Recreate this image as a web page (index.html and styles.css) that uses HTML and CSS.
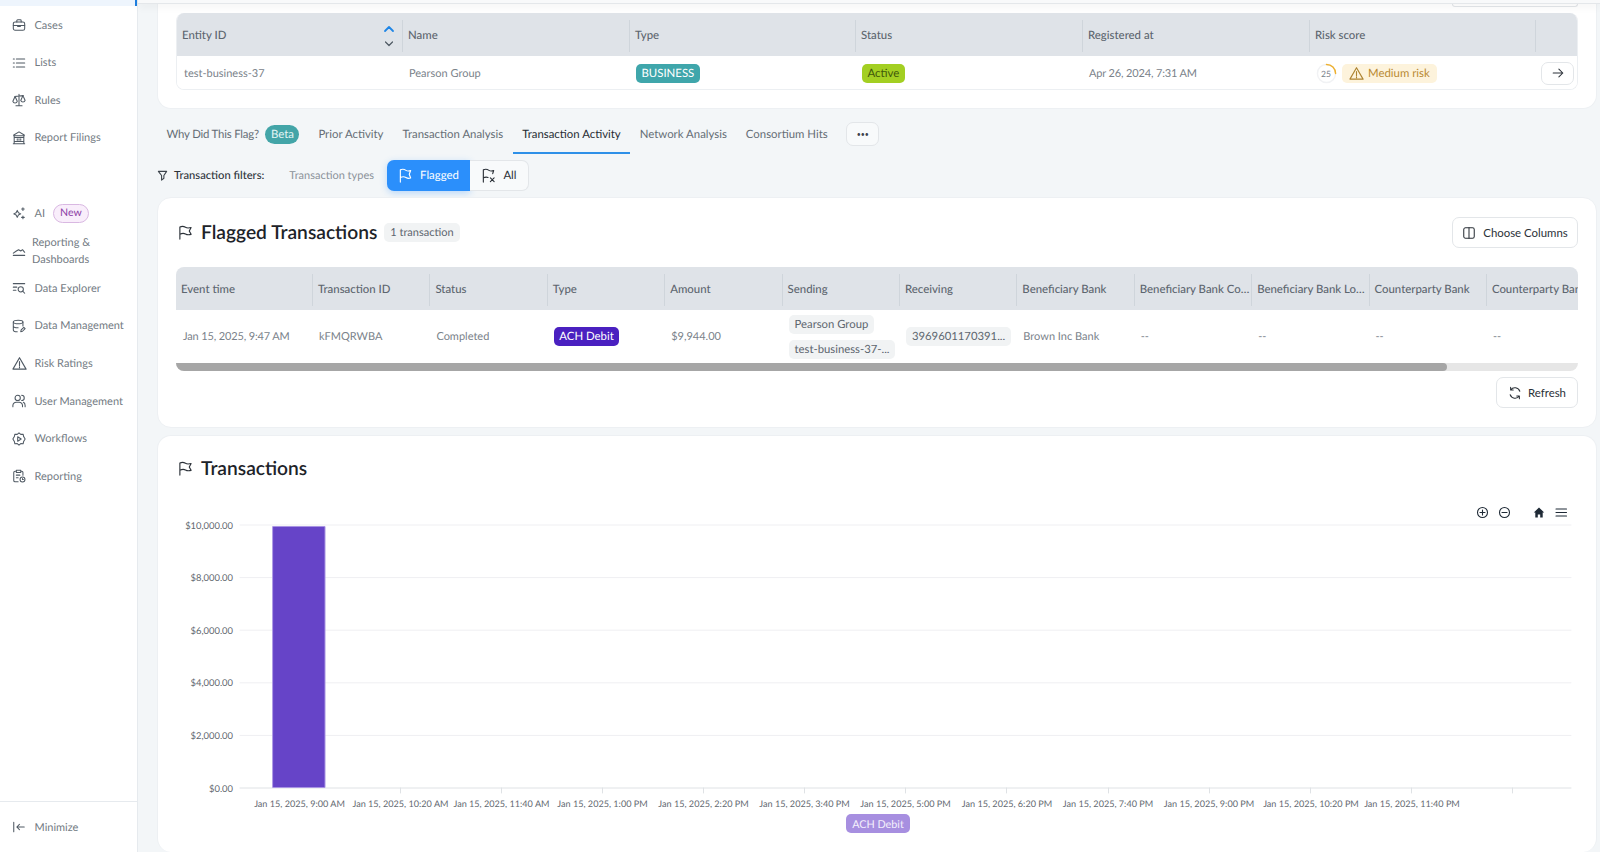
FILE: index.html
```html
<!DOCTYPE html>
<html lang="en">
<head>
    <meta charset="UTF-8">
    <title>Case details</title>
    <link rel="stylesheet" href="styles.css">
</head>
<body>
    <aside class="sidebar">
        <div class="nav-active-stub"></div>
        <a class="nav-item">
            <svg class="nav-icon" viewBox="0 0 16 16"><rect x="1.5" y="4.5" width="13" height="9.5" rx="2"/><path d="M5.5 4.5V3a1 1 0 0 1 1-1h3a1 1 0 0 1 1 1v1.500M1.500 8.500h13M6.500 8.500v1.200h3V8.500"/></svg>
            <span>Cases</span>
        </a>
        <a class="nav-item">
            <svg class="nav-icon" viewBox="0 0 16 16"><path d="M5 3.500h9.500M5 8h9.500M5 12.500h9.500M1.500 3.500h1.200M1.500 8h1.200M1.500 12.500h1.200"/></svg>
            <span>Lists</span>
        </a>
        <a class="nav-item">
            <svg class="nav-icon" viewBox="0 0 16 16"><path d="M8 1.500v12.500M4.500 14.500h7M3 4l10-1M3.500 4 1 9.500a2.600 2.600 0 0 0 5 0zM12.500 3 10 8.500a2.600 2.600 0 0 0 5 0z"/></svg>
            <span>Rules</span>
        </a>
        <a class="nav-item">
            <svg class="nav-icon" viewBox="0 0 16 16"><path d="M8 1 2 4.500v1h12v-1zM1.500 14.500h13M2.500 5.500v9M13.500 5.500v9M2.500 12h11M2.500 7.500h11M6 9v1.500M8 9v1.500M10 9v1.500"/></svg>
            <span>Report Filings</span>
        </a>
        <div class="nav-spacer"></div>
        <a class="nav-item">
            <svg class="nav-icon" viewBox="0 0 16 16"><path d="M6 5 7.300 7.700 10 9 7.300 10.300 6 13 4.700 10.300 2 9 4.700 7.700zM12.500 2v3M11 3.500h3M12.500 11.500v3M11 13h3"/></svg>
            <span>AI</span>
            <span class="new-pill">New</span>
        </a>
        <a class="nav-item nav-item-wrap">
            <svg class="nav-icon" viewBox="0 0 16 16"><path d="M1.500 13h13M1.500 10.500 5 8l2.500-1.500L10 8l2-1.500 2.500 3"/></svg>
            <span>Reporting &amp; Dashboards</span>
        </a>
        <a class="nav-item">
            <svg class="nav-icon" viewBox="0 0 16 16"><path d="M1.500 3h13M1.500 7h4M1.500 10.500h3"/><circle cx="10" cy="9.500" r="3"/><path d="m12.200 11.700 2.300 2.300"/></svg>
            <span>Data Explorer</span>
        </a>
        <a class="nav-item">
            <svg class="nav-icon" viewBox="0 0 16 16"><ellipse cx="7" cy="3.500" rx="5.500" ry="2"/><path d="M1.500 3.500v9c0 1.100 2.200 2 4.500 2M12.500 3.500V8M1.500 8c0 1.100 2.500 2 5.500 2M10 14.500l.5-2 3-3 1.500 1.500-3 3z"/></svg>
            <span>Data Management</span>
        </a>
        <a class="nav-item">
            <svg class="nav-icon nav-icon-lg" viewBox="0 0 16 16"><path d="M8 1.800 1 14h14zM8 6v4.200M8 11.600v.8"/></svg>
            <span>Risk Ratings</span>
        </a>
        <a class="nav-item">
            <svg class="nav-icon" viewBox="0 0 16 16"><circle cx="6.500" cy="4.500" r="3"/><path d="M1 14.500v-1.500a4 4 0 0 1 4-3.500h3a4 4 0 0 1 4 3.500v1.500M11 1.500a3 3 0 0 1 0 6M13 9.500c1.300.6 2 1.800 2 3.500v1.500"/></svg>
            <span>User Management</span>
        </a>
        <a class="nav-item">
            <svg class="nav-icon" viewBox="0 0 16 16"><path d="m8 1 2 1.700 2.700-.2.600 2.700L15 8l-1.700 2.800-.6 2.700-2.700-.2L8 15l-2-1.700-2.700.2-.6-2.700L1 8l1.700-2.800.6-2.700 2.700.2z"/><path d="M6.500 5.500v5L10.500 8z"/></svg>
            <span>Workflows</span>
        </a>
        <a class="nav-item">
            <svg class="nav-icon" viewBox="0 0 16 16"><path d="M7 14.500H3.500a1.500 1.500 0 0 1-1.500-1.500V4a1.500 1.500 0 0 1 1.500-1.500H5M10 2.500h1A1.500 1.500 0 0 1 12.500 4v3M5 1.500h5v2.500H5zM5 7h4M5 10h2"/><circle cx="12" cy="12" r="2.800"/><path d="M12 10.800V12h1"/></svg>
            <span>Reporting</span>
        </a>
        <div class="sidebar-footer">
            <svg class="nav-icon" viewBox="0 0 16 16"><path d="M2 2.500v11M14 8H5.500M8.500 5 5.500 8l3 3"/></svg>
            <span>Minimize</span>
        </div>
    </aside>

    <main class="main">
        <div class="top-strip"></div>

        <section class="card entity-card">
            <div class="cut-button"></div>
            <div class="table entity-table">
                <div class="thead entity-cols">
                    <div class="th th-first th-sort">
                        Entity ID
                        <svg class="sort-icon" viewBox="0 0 12 22"><path class="sort-up" d="m2 6 4-4 4 4"/><path d="m2.500 17 3.500 3.500 3.500-3.500"/></svg>
                    </div>
                    <div class="th">Name</div>
                    <div class="th">Type</div>
                    <div class="th">Status</div>
                    <div class="th">Registered at</div>
                    <div class="th">Risk score</div>
                    <div class="th"></div>
                </div>
                <div class="entity-cols entity-row">
                    <div class="td">test-business-37</div>
                    <div class="td">Pearson Group</div>
                    <div class="td td-badge"><span class="badge badge-teal">BUSINESS</span></div>
                    <div class="td td-badge"><span class="badge badge-lime">Active</span></div>
                    <div class="td td-date">Apr 26, 2024, 7:31 AM</div>
                    <div class="td td-risk">
                        <svg class="risk-ring" viewBox="0 0 22 22">
                            <circle cx="11" cy="11" r="9.500"/>
                            <path d="M11 1.500A9.500 9.500 0 0 1 20.500 11"/>
                            <text x="10.500" y="14.200">25</text>
                        </svg>
                        <span class="risk-pill">
                            <svg viewBox="0 0 16 16"><path d="M8 1.800 1 14h14zM8 6v4.200M8 11.600v.8"/></svg>
                            Medium risk
                        </span>
                    </div>
                    <div class="td td-action">
                        <button class="btn arrow-btn">
                            <svg viewBox="0 0 16 16"><path d="M2.500 8h11M9 3.500 13.500 8 9 12.500"/></svg>
                        </button>
                    </div>
                </div>
            </div>
        </section>

        <nav class="tabs">
            <a class="tab"><span class="tab-tight">Why Did This Flag?</span> <span class="beta-pill">Beta</span></a>
            <a class="tab">Prior Activity</a>
            <a class="tab">Transaction Analysis</a>
            <a class="tab tab-active">Transaction Activity</a>
            <a class="tab">Network Analysis</a>
            <a class="tab">Consortium Hits</a>
            <button class="btn more-btn">&#8226;&#8226;&#8226;</button>
        </nav>

        <div class="filters">
            <svg class="filter-icon" viewBox="0 0 12 12"><path d="M1.500 1.500h9L7.500 6v3L5 11V6z"/></svg>
            <span class="filter-label">Transaction filters:</span>
            <span class="filter-type">Transaction types</span>
            <div class="segmented">
                <span class="segment segment-on">
                    <svg viewBox="0 0 16 16"><path d="M2.500 15V2c3-1.500 4.500-.5 6 .5s3 1 5 .2l-1.500 4 1.500 4c-2 .8-3.500.5-5-.5s-3-1.500-6 0"/></svg>
                    Flagged
                </span>
                <span class="segment">
                    <svg viewBox="0 0 16 16"><path d="M2.500 15V2c3-1.500 4.500-.5 6 .5s3 1 5 .2l-1 3.300M2.500 10.500c2-1 3.500-1 5-.4M10 10.500l4 4M14 10.500l-4 4"/></svg>
                    All
                </span>
            </div>
        </div>

        <section class="card flagged-card">
            <div class="card-head">
                <svg class="title-flag" viewBox="0 0 16 16"><path d="M2 15V2.200c3-1.500 4.500-.6 6 .3s3 1 6 .2l-2 3.800 2 3.500c-3 .8-4.500.5-6-.4s-3-1.200-6 .2"/></svg>
                <h2 class="card-title">Flagged Transactions</h2>
                <span class="count-chip">1 transaction</span>
                <button class="btn columns-btn">
                    <svg viewBox="0 0 16 16"><rect x="2" y="2" width="12" height="12" rx="2"/><path d="M8 2v12"/></svg>
                    Choose Columns
                </button>
            </div>
            <div class="table tx-wrap">
                <div class="tx-scroll">
                    <div class="thead tx-cols">
                        <div class="th th-first">Event time</div>
                        <div class="th">Transaction ID</div>
                        <div class="th">Status</div>
                        <div class="th">Type</div>
                        <div class="th">Amount</div>
                        <div class="th">Sending</div>
                        <div class="th">Receiving</div>
                        <div class="th">Beneficiary Bank</div>
                        <div class="th"><span class="ellipsis">Beneficiary Bank Country</span></div>
                        <div class="th"><span class="ellipsis">Beneficiary Bank Location</span></div>
                        <div class="th">Counterparty Bank</div>
                        <div class="th">Counterparty Bank Country</div>
                    </div>
                    <div class="tx-cols tx-row">
                        <div class="td td-date">Jan 15, 2025, 9:47 AM</div>
                        <div class="td">kFMQRWBA</div>
                        <div class="td">Completed</div>
                        <div class="td td-badge"><span class="badge badge-purple">ACH Debit</span></div>
                        <div class="td">$9,944.00</div>
                        <div class="td td-badge td-chips">
                            <span class="chip">Pearson Group</span>
                            <span class="chip">test-business-37-...</span>
                        </div>
                        <div class="td td-badge"><span class="chip">3969601170391...</span></div>
                        <div class="td">Brown Inc Bank</div>
                        <div class="td">--</div>
                        <div class="td">--</div>
                        <div class="td">--</div>
                        <div class="td">--</div>
                    </div>
                </div>
                <div class="scroll-track"><div class="scroll-thumb"></div></div>
            </div>
            <div class="card-foot">
                <button class="btn refresh-btn">
                    <svg viewBox="0 0 16 16"><path d="M13.500 6A6 6 0 0 0 3 4.500M2.500 10a6 6 0 0 0 10.500 1.500M3 1.500v3h3M13 14.500v-3h-3"/></svg>
                    Refresh
                </button>
            </div>
        </section>

        <section class="card chart-card">
            <div class="chart-head">
                <svg class="title-flag" viewBox="0 0 16 16"><path d="M2 15V2.200c3-1.500 4.500-.6 6 .3s3 1 6 .2l-2 3.800 2 3.500c-3 .8-4.500.5-6-.4s-3-1.200-6 .2"/></svg>
                <h2 class="card-title">Transactions</h2>
            </div>
            <svg class="chart" viewBox="157 490 1440 362">
                <g class="grid">
                    <path d="M240 525H1571M240 577.600H1571M240 630.200H1571M240 682.800H1571M240 735.400H1571"/>
                </g>
                <path class="axis" d="M240 788H1571M400.500 788v5M501.500 788v5M602.500 788v5M703.500 788v5M804.500 788v5M905.500 788v5M1006.500 788v5M1108.500 788v5M1209.500 788v5M1310.500 788v5M1411.500 788v5M1512.500 788v5"/>
                <rect class="bar" x="273" y="526.500" width="52" height="261"/>
                <g class="y-labels">
                    <text x="233" y="528.500">$10,000.00</text>
                    <text x="233" y="581">$8,000.00</text>
                    <text x="233" y="633.500">$6,000.00</text>
                    <text x="233" y="686">$4,000.00</text>
                    <text x="233" y="739">$2,000.00</text>
                    <text x="233" y="791.500">$0.00</text>
                </g>
                <g class="x-labels">
                    <text x="299.500" y="807">Jan 15, 2025, 9:00 AM</text>
                    <text x="400.500" y="807">Jan 15, 2025, 10:20 AM</text>
                    <text x="501.500" y="807">Jan 15, 2025, 11:40 AM</text>
                    <text x="602.500" y="807">Jan 15, 2025, 1:00 PM</text>
                    <text x="703.500" y="807">Jan 15, 2025, 2:20 PM</text>
                    <text x="804.500" y="807">Jan 15, 2025, 3:40 PM</text>
                    <text x="905.500" y="807">Jan 15, 2025, 5:00 PM</text>
                    <text x="1007" y="807">Jan 15, 2025, 6:20 PM</text>
                    <text x="1108" y="807">Jan 15, 2025, 7:40 PM</text>
                    <text x="1209" y="807">Jan 15, 2025, 9:00 PM</text>
                    <text x="1311" y="807">Jan 15, 2025, 10:20 PM</text>
                    <text x="1412" y="807">Jan 15, 2025, 11:40 PM</text>
                </g>
                <rect class="legend-box" x="846" y="814" width="64" height="19" rx="5"/>
                <text class="legend-text" x="878" y="827.500">ACH Debit</text>
                <g class="toolbar">
                    <circle cx="1482.500" cy="512.500" r="5"/>
                    <path d="M1480 512.500h5M1482.500 510v5"/>
                    <circle cx="1504.500" cy="512.500" r="5"/>
                    <path d="M1502 512.500h5"/>
                    <path d="M1556 509h10.500M1556 512.500h10.500M1556 516h10.500"/>
                    <path class="home" d="M1539 507.500 1533.800 512.500h1.500v5h2.500v-3h2.400v3h2.500v-5h1.500z"/>
                </g>
            </svg>
        </section>
    </main>
</body>
</html>
```

FILE: styles.css
```css
* {
    box-sizing: border-box;
}

body {
    margin: 0;
    width: 1600px;
    height: 852px;
    overflow: hidden;
    display: flex;
    font-family: "Lato", "Noto Sans", sans-serif;
    font-size: 11.4px;
    text-rendering: geometricPrecision;
    color: #6f7780;
    background: #f3f6f8;
}

svg {
    fill: none;
    stroke: currentColor;
    stroke-width: 1.2;
    stroke-linecap: round;
    stroke-linejoin: round;
    flex-shrink: 0;
}

/* sidebar */
.sidebar {
    width: 138px;
    height: 852px;
    flex-shrink: 0;
    display: flex;
    flex-direction: column;
    background: #fff;
    border-right: 1px solid #e6eaee;
    font-size: 11px;
}

.nav-active-stub {
    height: 6.400px;
    flex-shrink: 0;
    background: #eef5fd;
    border-right: 2px solid #1f7fe0;
}

.nav-item {
    height: 37.6px;
    flex-shrink: 0;
    display: flex;
    align-items: center;
    gap: 8.500px;
    padding-left: 12px;
    color: #737b83;
}

.nav-item-wrap {
    gap: 6px;
    line-height: 17px;
}

.nav-spacer {
    height: 37.6px;
    flex-shrink: 0;
}

.nav-icon {
    width: 14px;
    height: 14px;
    color: #4f5963;
}

.nav-icon-lg {
    width: 15px;
    height: 15px;
    margin-right: -1px;
}

.new-pill {
    height: 19px;
    padding: 0 6.500px;
    margin-left: -1px;
    display: flex;
    align-items: center;
    border: 1px solid #d9b8e2;
    border-radius: 10px;
    background: #f9eefb;
    color: #8e3ea6;
    font-size: 10.600px;
}

.sidebar-footer {
    margin-top: auto;
    height: 51px;
    display: flex;
    align-items: center;
    gap: 8.500px;
    padding: 0 12px;
    border-top: 1px solid #e6eaee;
    color: #737b83;
}

/* main column */
.main {
    flex: 1;
    min-width: 0;
    height: 852px;
    padding: 0 3px 0 19px;
    display: flex;
    flex-direction: column;
    position: relative;
}

.top-strip {
    height: 4px;
    margin: 0 -3px 0 -19px;
    background: #f8f9fa;
    border-bottom: 1px solid #e4e7ea;
    box-shadow: 0 2px 8px rgba(0, 0, 0, 0.08);
    position: relative;
    z-index: 1;
}

.card {
    background: #fff;
    border-radius: 14px;
    border: 1px solid #edf0f3;
    flex-shrink: 0;
}

.entity-card {
    height: 105px;
    padding: 0 18px;
    border-top: none;
    border-top-left-radius: 0;
    border-top-right-radius: 0;
}

.cut-button {
    width: 126px;
    height: 3px;
    margin-left: auto;
    margin-bottom: 6px;
    border: 1px solid #e3e6e9;
    border-top: none;
    border-radius: 0 0 6px 6px;
}

.table {
    border-radius: 8px;
    overflow: hidden;
}

.entity-table {
    border: 1px solid #eceff2;
    border-top: none;
}

.thead {
    height: 43px;
    background: #dfe3e8;
    color: #5d666f;
}

.entity-cols {
    display: grid;
    grid-template-columns: 225px 227px 226px 227px 227px 226px 43px;
}

.th {
    margin: 7px 0 4px;
    padding: 0 0 1px 5px;
    display: flex;
    align-items: center;
    white-space: nowrap;
    border-left: 1px solid #cfd5db;
    min-width: 0;
    font-weight: 500;
}

.th-first {
    border-left: none;
}

.th-sort {
    justify-content: space-between;
    padding-right: 7px;
}

.sort-icon {
    width: 12px;
    height: 22px;
    color: #4f5963;
}

.sort-up {
    stroke: #1f86e6;
    stroke-width: 1.8;
}

.ellipsis {
    overflow: hidden;
    text-overflow: ellipsis;
}

.td {
    padding-left: 7px;
    display: flex;
    align-items: center;
    white-space: nowrap;
    color: #7a828a;
    font-size: 11px;
}

.td-date {
    letter-spacing: -0.150px;
}

.entity-row {
    height: 33px;
    padding-top: 1px;
    background: #fff;
}

.badge {
    height: 19px;
    padding: 0 5.500px;
    display: inline-flex;
    align-items: center;
    border-radius: 5px;
    font-size: 11.400px;
}

.badge-teal {
    background: #3fa6ab;
    color: #fff;
}

.badge-lime {
    background: #a3cf22;
    color: #40570a;
}

.badge-purple {
    background: #4a20c0;
    color: #fff;
}

.td-risk {
    padding-left: 7px;
    gap: 5px;
}

.risk-ring {
    width: 21px;
    height: 21px;
}

.risk-ring circle {
    stroke: #f1f2f4;
    stroke-width: 1.5;
}

.risk-ring path {
    stroke: #eeb130;
    stroke-width: 1.5;
}

.risk-ring text {
    fill: #7a828a;
    stroke: none;
    font-size: 9px;
    text-anchor: middle;
}

.risk-pill {
    height: 19px;
    padding: 0 7px;
    display: inline-flex;
    align-items: center;
    gap: 4px;
    border-radius: 5px;
    background: #fdf3dc;
    color: #b98a33;
    font-size: 11.400px;
}

.risk-pill svg {
    width: 15px;
    height: 15px;
    color: #ad8330;
}

.td-action {
    padding-left: 6px;
}

.btn {
    background: #fff;
    border: 1px solid #e3e6e9;
    border-radius: 7px;
    font-family: inherit;
    font-size: 11.400px;
    color: #2b3138;
    display: inline-flex;
    align-items: center;
    justify-content: center;
    padding: 0;
}

.arrow-btn {
    width: 33px;
    height: 23px;
}

.arrow-btn svg {
    width: 14px;
    height: 14px;
}

/* tabs */
.tabs {
    height: 37px;
    margin-top: 8px;
    display: flex;
    align-items: stretch;
    flex-shrink: 0;
}

.tab {
    padding: 0 9.500px;
    display: flex;
    align-items: center;
    gap: 6.500px;
    color: #656d75;
    border-bottom: 2px solid transparent;
    white-space: nowrap;
}

.tab-tight {
    letter-spacing: -0.200px;
}

.tab-active {
    color: #262c33;
    border-bottom-color: #2e90e8;
}

.beta-pill {
    height: 19px;
    padding: 0 5.500px;
    display: flex;
    align-items: center;
    border-radius: 10px;
    background: #43a5a8;
    color: #e4f5f5;
}

.more-btn {
    width: 33px;
    height: 24px;
    margin: 5px 0 0 9px;
    font-size: 7px;
    color: #3c444c;
    background: #f8fafb;
}

/* filter row */
.filters {
    height: 31px;
    margin-top: 6px;
    display: flex;
    align-items: center;
    flex-shrink: 0;
}

.filter-icon {
    width: 11px;
    height: 11px;
    color: #3c444c;
}

.filter-label {
    margin-left: 6px;
    color: #2e343b;
    font-weight: 500;
    font-size: 11.200px;
}

.filter-type {
    margin-left: 25px;
    color: #8b929a;
    font-size: 11px;
}

.segmented {
    margin-left: 13px;
    height: 31px;
    display: flex;
}

.segment {
    width: 59px;
    display: flex;
    align-items: center;
    justify-content: center;
    gap: 7px;
    border: 1px solid #e3e6e9;
    border-left: none;
    border-radius: 0 7px 7px 0;
    background: #f8fafb;
    color: #2b3138;
}

.segment svg {
    width: 15px;
    height: 15px;
}

.segment-on {
    width: 83px;
    border: none;
    border-radius: 7px 0 0 7px;
    background: #2b8ffb;
    color: #fff;
    box-shadow: 0 2px 7px rgba(43, 143, 251, 0.3);
}

/* flagged card */
.flagged-card {
    height: 231px;
    margin-top: 6px;
    padding: 19px 18px 0;
}

.card-head {
    height: 31px;
    margin-bottom: 19px;
    display: flex;
    align-items: center;
}

.title-flag {
    width: 15px;
    height: 15px;
    color: #2b3138;
    margin-left: 2px;
}

.card-title {
    margin: 0 0 0 8px;
    font-size: 19.200px;
    line-height: 24px;
    font-weight: 600;
    color: #1d2329;
}

.count-chip {
    height: 19px;
    margin-left: 7px;
    padding: 0 6px;
    display: flex;
    align-items: center;
    border-radius: 5px;
    background: #f1f3f4;
    color: #5d666f;
    font-size: 11px;
}

.columns-btn {
    margin-left: auto;
    width: 126px;
    height: 31px;
    gap: 7px;
}

.columns-btn svg,
.refresh-btn svg {
    width: 14px;
    height: 14px;
}

.tx-wrap {
    width: 1402px;
}

.tx-scroll {
    overflow: hidden;
}

.tx-cols {
    display: grid;
    grid-template-columns: 136px repeat(11, 117.400px);
    width: 1427px;
}

.tx-row {
    height: 53px;
}

.td-chips {
    flex-direction: column;
    align-items: flex-start;
    justify-content: center;
    gap: 6px;
}

.chip {
    height: 19px;
    padding: 0 6px;
    display: inline-flex;
    align-items: center;
    border-radius: 5px;
    background: #f1f3f4;
    color: #5d666f;
    font-size: 11.300px;
}

.scroll-track {
    height: 8px;
    background: #e6e6e6;
}

.scroll-thumb {
    width: 1271px;
    height: 8px;
    border-radius: 0 4px 4px 4px;
    background: #a6a6a6;
}

.card-foot {
    margin-top: 6px;
    display: flex;
    justify-content: flex-end;
}

.refresh-btn {
    width: 82px;
    height: 31px;
    gap: 6px;
}

/* chart card */
.chart-card {
    height: 417px;
    margin-top: 7px;
    border-bottom: none;
}

.chart-head {
    height: 54px;
    padding: 21px 18px 10px;
    display: flex;
    align-items: center;
}

.chart {
    display: block;
    width: 1440px;
    height: 362px;
    margin-left: -1px;
    stroke: none;
}

.grid {
    stroke: #efeff2;
    stroke-width: 1;
}

.axis {
    stroke: #dfe2e5;
    stroke-width: 1;
}

.bar {
    fill: #6644c8;
    stroke: #a893e3;
    stroke-width: 1;
}

.y-labels text {
    fill: #62686f;
    stroke: none;
    font-size: 9.400px;
    text-anchor: end;
}

.x-labels text {
    fill: #62686f;
    stroke: none;
    font-size: 9.100px;
    text-anchor: middle;
}

.legend-box {
    fill: #a78fe0;
    stroke: none;
}

.legend-text {
    fill: #f4f0fc;
    stroke: none;
    font-size: 10.800px;
    text-anchor: middle;
}

.toolbar {
    stroke: #1f2a36;
    stroke-width: 1.1;
}

.home {
    fill: #1f2a36;
    stroke: none;
}
```
